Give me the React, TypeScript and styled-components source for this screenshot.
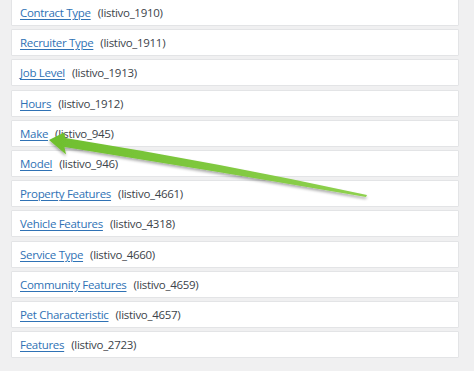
import React from "react"
import styled, { createGlobalStyle } from "styled-components"

const GlobalStyle = createGlobalStyle`
  html, body {
    margin: 0;
    padding: 0;
    background: #f0f0f1;
    overflow: hidden;
  }
`

const Page = styled.div`
  position: relative;
  width: 474px;
  height: 371px;
  background: #f0f0f1;
  font-family: "Open Sans", "Liberation Sans", sans-serif;
  font-size: 11.5px;
  letter-spacing: -0.3px;
`

const List = styled.ul`
  list-style: none;
  margin: -1px 0 0;
  padding: 0 15px 0 11px;
  display: flex;
  flex-direction: column;
  gap: 3.2px;
`

const Row = styled.li`
  box-sizing: border-box;
  height: 27px;
  display: flex;
  align-items: center;
  padding: 0 8px;
  background: #fff;
  border: 1px solid #e3e4e6;
  border-radius: 1px;
`

const Name = styled.a`
  color: #2f72b5;
  text-decoration: underline;
  text-underline-offset: 2px;
  text-decoration-thickness: 1px;
`

const Key = styled.span`
  color: #3c434a;
  margin-left: 7px;
`

const Arrow = styled.svg`
  position: absolute;
  left: 0;
  top: 0;
  pointer-events: none;
`

const fields = [
  ["Contract Type", "listivo_1910"],
  ["Recruiter Type", "listivo_1911"],
  ["Job Level", "listivo_1913"],
  ["Hours", "listivo_1912"],
  ["Make", "listivo_945"],
  ["Model", "listivo_946"],
  ["Property Features", "listivo_4661"],
  ["Vehicle Features", "listivo_4318"],
  ["Service Type", "listivo_4660"],
  ["Community Features", "listivo_4659"],
  ["Pet Characteristic", "listivo_4657"],
  ["Features", "listivo_2723"],
]

export default function App() {
  return (
    <Page>
      <GlobalStyle />
      <List>
        {fields.map(([name, key]) => (
          <Row key={key}>
            <Name href="#">{name}</Name>
            <Key>({key})</Key>
          </Row>
        ))}
      </List>
      <Arrow width="474" height="371" viewBox="0 0 474 371">
        <defs>
          <filter id="sh" x="-10%" y="-50%" width="120%" height="200%">
            <feGaussianBlur in="SourceAlpha" stdDeviation="1.6" />
            <feOffset dx="0" dy="2" result="b" />
            <feComponentTransfer>
              <feFuncA type="linear" slope="0.35" />
            </feComponentTransfer>
            <feMerge>
              <feMergeNode />
              <feMergeNode in="SourceGraphic" />
            </feMerge>
          </filter>
          <linearGradient id="g" x1="0" y1="0" x2="1" y2="0">
            <stop offset="0" stopColor="#6fbf2e" />
            <stop offset="1" stopColor="#8fd14f" />
          </linearGradient>
        </defs>
        <path
          filter="url(#sh)"
          fill="url(#g)"
          d="M49 141 L64 133.5 L65.5 139 Q220 164 367 196 L366 198 Q215 172 64.5 148 L66 155.5 Z"
        />
      </Arrow>
    </Page>
  )
}
